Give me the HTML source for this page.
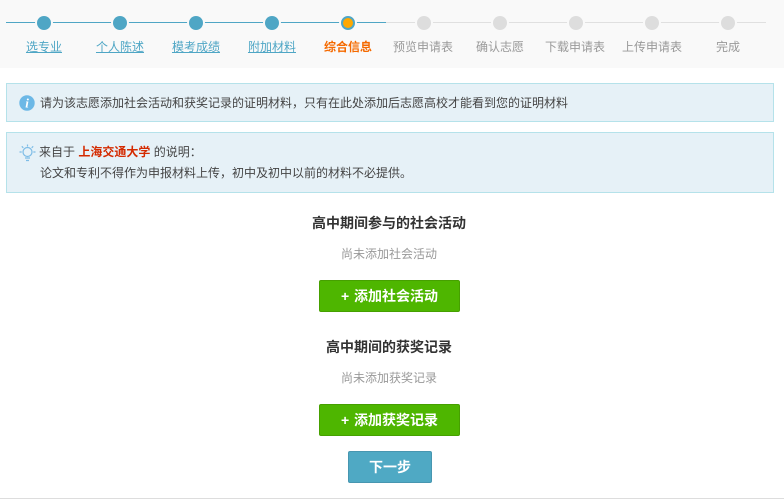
<!DOCTYPE html>
<html lang="zh-CN">
<head>
<meta charset="utf-8">
<style>
html,body{margin:0;padding:0;background:#fff;}
body{width:784px;height:499px;position:relative;overflow:hidden;font-family:"Liberation Sans","Noto Sans CJK SC",sans-serif;font-size:12px;color:#444;}
.abs{position:absolute;white-space:nowrap;}
.top{position:absolute;left:0;top:0;width:784px;height:68px;background:#f9f9f9;}
.ln{position:absolute;height:1px;top:22px;}
.dot{position:absolute;top:16px;width:14px;height:14px;border-radius:50%;box-shadow:0 0 0 2px #f9f9f9;}
.lab{position:absolute;top:39px;width:100px;text-align:center;font-size:12px;line-height:16px;white-space:nowrap;}
.done{color:#4fa6c5;text-decoration:underline;}
.todo{color:#999;}
.box{position:absolute;left:6px;width:766px;background:#e6f1f7;border:1px solid #b5e2ea;}
.c{position:absolute;left:0;width:784px;text-align:center;white-space:nowrap;}
.btn{position:absolute;box-sizing:border-box;text-align:center;color:#fff;font-weight:bold;border-radius:2px;font-size:14px;white-space:nowrap;}
.g{left:319px;width:141px;height:32px;line-height:30px;background:#4eb600;border:1px solid #46a000;word-spacing:1px;}
</style>
</head>
<body>
<div class="top"></div>
<div class="ln" style="left:6px;width:380px;background:#4fa6c5"></div>
<div class="ln" style="left:386px;width:380px;background:#e0e0e0"></div>
<div class="dot" style="left:37px;background:#4fa6c5"></div>
<div class="dot" style="left:113px;background:#4fa6c5"></div>
<div class="dot" style="left:189px;background:#4fa6c5"></div>
<div class="dot" style="left:265px;background:#4fa6c5"></div>
<div class="dot" style="left:341px;background:#ffa800;box-sizing:border-box;border:2px solid #4fa6c5"></div>
<div class="dot" style="left:417px;background:#ddd"></div>
<div class="dot" style="left:493px;background:#ddd"></div>
<div class="dot" style="left:569px;background:#ddd"></div>
<div class="dot" style="left:645px;background:#ddd"></div>
<div class="dot" style="left:721px;background:#ddd"></div>
<div class="lab done" style="left:-6px">选专业</div>
<div class="lab done" style="left:70px">个人陈述</div>
<div class="lab done" style="left:146px">模考成绩</div>
<div class="lab done" style="left:222px">附加材料</div>
<div class="lab" style="left:298px;color:#f56a00;font-weight:bold">综合信息</div>
<div class="lab todo" style="left:373px">预览申请表</div>
<div class="lab todo" style="left:450px">确认志愿</div>
<div class="lab todo" style="left:525px">下载申请表</div>
<div class="lab todo" style="left:602px">上传申请表</div>
<div class="lab todo" style="left:678px">完成</div>

<div class="box" style="top:83px;height:37px"></div>
<svg class="abs" style="left:19px;top:95px" width="16" height="16" viewBox="0 0 16 16"><circle cx="8" cy="8" r="7.7" fill="#6cb8e6"/><text x="8" y="12.7" text-anchor="middle" font-family="Liberation Serif" font-style="italic" font-weight="bold" font-size="13" fill="#fff">i</text></svg>
<div class="abs" style="left:40px;top:95px;line-height:16px">请为该志愿添加社会活动和获奖记录的证明材料，只有在此处添加后志愿高校才能看到您的证明材料</div>

<div class="box" style="top:132px;height:59px"></div>
<svg class="abs" style="left:19px;top:144px" width="17" height="18" viewBox="0 0 17 18" fill="none" stroke="#7dbce6" stroke-width="1.2"><circle cx="8.500" cy="8" r="4.500"/><path d="M6 14h5M7 16.500h3M8.500 0.500v2M0.500 8h2.200M14.300 8h2.200M2.800 2.300l1.500 1.500M14.200 2.300l-1.500 1.500"/></svg>
<div class="abs" style="left:39px;top:143px;line-height:18px">来自于 <span style="color:#d42a00;font-weight:bold">上海交通大学</span> 的说明：</div>
<div class="abs" style="left:40px;top:164px;line-height:18px">论文和专利不得作为申报材料上传，初中及初中以前的材料不必提供。</div>

<div class="c" style="top:214px;left:-3px;font-size:14px;line-height:18px;font-weight:bold;color:#333">高中期间参与的社会活动</div>
<div class="c" style="top:245px;left:-3px;line-height:18px;color:#999">尚未添加社会活动</div>
<div class="btn g" style="top:280px">+ 添加社会活动</div>

<div class="c" style="top:338px;left:-3px;font-size:14px;line-height:18px;font-weight:bold;color:#333">高中期间的获奖记录</div>
<div class="c" style="top:369px;left:-3px;line-height:18px;color:#999">尚未添加获奖记录</div>
<div class="btn g" style="top:404px">+ 添加获奖记录</div>

<div class="btn" style="left:348px;top:451px;width:84px;height:32px;line-height:30px;background:#4fa9c4;border:1px solid #4796b0">下一步</div>
<div class="abs" style="left:0;top:498px;width:784px;height:1px;background:#ddd"></div>
</body>
</html>
